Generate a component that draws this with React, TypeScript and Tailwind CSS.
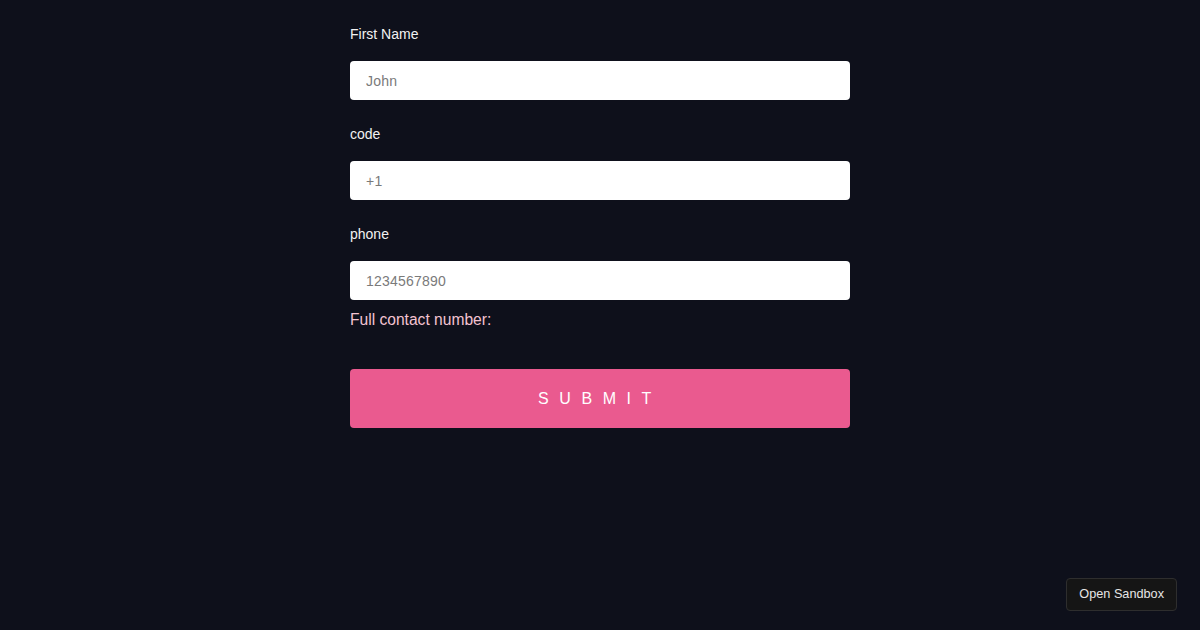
export default function App() {
  const fields = [
    { label: 'First Name', placeholder: 'John' },
    { label: 'code', placeholder: '+1' },
    { label: 'phone', placeholder: '1234567890' },
  ];

  return (
    <div className="min-h-screen bg-[#0e101b] font-['Liberation_Sans',Arial,sans-serif] relative">
      <form className="w-[500px] mx-auto pt-[26px]" onSubmit={(e) => e.preventDefault()}>
        {fields.map((f, i) => (
          <div key={f.label} className={i < fields.length - 1 ? 'mb-[26px]' : ''}>
            <label className="block text-[14px] leading-[16px] text-[#f2f2f2] mb-[19px]">{f.label}</label>
            <input
              placeholder={f.placeholder}
              className="block w-full h-[39px] rounded-[4px] bg-white px-4 text-[14px] text-[#333] tracking-[0.2px] placeholder:text-[#7a7a7a] outline-none"
            />
          </div>
        ))}
        <p className="mt-[11px] text-[15.6px] leading-[18px] text-[#f3c3d1]">Full contact number:</p>
        <button
          type="submit"
          className="mt-[40px] w-full h-[59px] rounded-[4px] bg-[#ea5a8f] text-white text-[16px] tracking-[0.66em]"
        >
          SUBMIT
        </button>
      </form>
      <button className="absolute right-[23px] bottom-[19px] h-[33px] px-[12px] rounded-[4px] bg-[#151515] border border-[#2e2e2e] text-[12.7px] text-[#e6e6e6]">
        Open Sandbox
      </button>
    </div>
  );
}
